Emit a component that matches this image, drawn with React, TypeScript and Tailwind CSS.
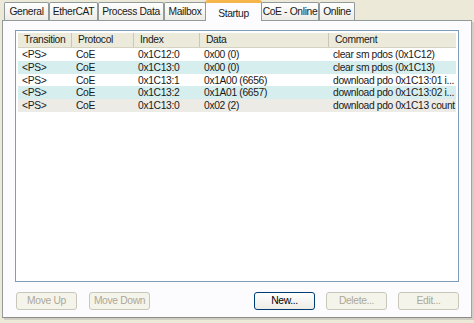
import React from 'react';

const tabs = [
  { label: 'General', w: 'w-[45px]' },
  { label: 'EtherCAT', w: 'w-[49px]' },
  { label: 'Process Data', w: 'w-[66px]' },
  { label: 'Mailbox', w: 'w-[42px]' },
  { label: 'Startup', w: 'w-[57px]' },
  { label: 'CoE - Online', w: 'w-[58px]' },
  { label: 'Online', w: 'w-[36px]' },
];

const rows = [
  ['<PS>', 'CoE', '0x1C12:0', '0x00 (0)', 'clear sm pdos (0x1C12)'],
  ['<PS>', 'CoE', '0x1C13:0', '0x00 (0)', 'clear sm pdos (0x1C13)'],
  ['<PS>', 'CoE', '0x1C13:1', '0x1A00 (6656)', 'download pdo 0x1C13:01 i...'],
  ['<PS>', 'CoE', '0x1C13:2', '0x1A01 (6657)', 'download pdo 0x1C13:02 i...'],
  ['<PS>', 'CoE', '0x1C13:0', '0x02 (2)', 'download pdo 0x1C13 count'],
];

const rowBg = ['bg-white', 'bg-[#d6eeee]', 'bg-white', 'bg-[#d6eeee]', 'bg-[#ecebe6]'];

const cols = ['w-[54px]', 'w-[62px]', 'w-[66px]', 'w-[129px]', 'flex-1'];
const headers = ['Transition', 'Protocol', 'Index', 'Data', 'Comment'];

function Btn({ label, enabled }: { label: string; enabled?: boolean }) {
  return (
    <button
      className={`w-[61px] h-[18px] rounded-[3px] leading-none ${
        enabled
          ? 'border border-[#003c74] bg-gradient-to-b from-white to-[#ecebe6] text-black'
          : 'border border-[#c9c7ba] bg-[#f5f4ea] text-[#aca899]'
      }`}
    >
      {label}
    </button>
  );
}

export default function App() {
  return (
    <div className="w-[474px] h-[323px] bg-[#ece9d8] pt-[2px] text-[10.3px] tracking-[-0.35px] text-[#1a1a1a] overflow-hidden [font-family:'Liberation_Sans',Arial,sans-serif]">
      {/* Tabs */}
      <div className="flex items-end h-[18px] pl-[4px]">
        {tabs.map((t) => {
          const active = t.label === 'Startup';
          return (
            <div
              key={t.label}
              className={`${t.w} shrink-0 whitespace-nowrap justify-center ${
                active
                  ? 'relative z-10 -mb-[1px] -mx-[1px] h-[21px] pt-[3px] bg-[#fcfcfe] border-x border-[#919b9c] border-t-[3px] border-t-[#f7b64b] rounded-t-[3px] flex items-start'
                  : 'h-[18px] bg-gradient-to-b from-white to-[#ecebe5] border border-b-0 border-[#919b9c] rounded-t-[2px] flex items-center'
              }`}
            >
              {t.label}
            </div>
          );
        })}
      </div>

      {/* Panel */}
      <div className="mx-[2px] h-[298px] bg-[#fcfcfe] border border-[#919b9c] border-r-[#a4a39d] border-b-[#8c8b86] shadow-[2px_2px_0_#d0cec4] flex flex-col px-[12px] pt-[9px]">
        <div className="h-[252px] border border-[#7f9db9] bg-white p-[2px]">
          <div className="flex h-[15px] bg-[#ebeadb] border-b border-[#d6d2c2]">
            {headers.map((h, i) => (
              <div key={h} className={`${cols[i]} pl-[6px] flex items-center border-r border-[#cbc7b8] last:border-r-0`}>
                {h}
              </div>
            ))}
          </div>
          {rows.map((r, ri) => (
            <div key={ri} className={`flex h-[12.8px] ${rowBg[ri]}`}>
              {r.map((c, ci) => (
                <div key={ci} className={`${cols[ci]} pl-[4px] leading-[13px] whitespace-nowrap overflow-hidden`}>
                  {c}
                </div>
              ))}
            </div>
          ))}
        </div>

        <div className="flex items-center mt-[10px] pl-[1px]">
          <Btn label="Move Up" />
          <div className="w-[12px]" />
          <Btn label="Move Down" />
          <div className="flex-1" />
          <Btn label="New..." enabled />
          <div className="w-[11px]" />
          <Btn label="Delete..." />
          <div className="w-[11px]" />
          <Btn label="Edit..." />
        </div>
      </div>
    </div>
  );
}
